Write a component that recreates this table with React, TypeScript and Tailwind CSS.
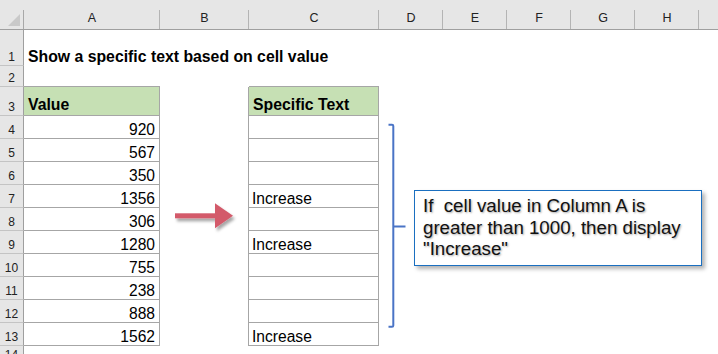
import React from "react";

const COLS = ["A", "B", "C", "D", "E", "F", "G", "H", ""];

type Row = { n: number; a?: string; c?: string };

const dataRows: Row[] = [
  { n: 4, a: "920" },
  { n: 5, a: "567" },
  { n: 6, a: "350" },
  { n: 7, a: "1356", c: "Increase" },
  { n: 8, a: "306" },
  { n: 9, a: "1280", c: "Increase" },
  { n: 10, a: "755" },
  { n: 11, a: "238" },
  { n: 12, a: "888" },
  { n: 13, a: "1562", c: "Increase" },
];

const font = "font-['Liberation_Sans',Arial,sans-serif]";

function RowHead({ n }: { n: number }) {
  return (
    <div className="flex items-end justify-center border-r border-b border-r-[#9f9f9f] border-b-[#c4c4c4] bg-[#e6e6e6] pb-[1px] text-[12px] leading-[14px] text-[#222]">
      {n}
    </div>
  );
}

function Empty({ cls = "" }: { cls?: string }) {
  return <div className={cls} />;
}

export default function App() {
  return (
    <div className={`relative h-[354px] w-[718px] overflow-hidden bg-white ${font}`}>
      <div className="grid grid-cols-[24px_136px_89px_130px_64px_64px_64px_64px_64px_19px] grid-rows-[30px_36px_21px_29px_23px_23px_23px_23px_23px_23px_23px_23px_23px_23px_18px]">
        {/* column header row */}
        <div className="relative border-b border-[#9f9f9f] bg-[#e6e6e6]">
          <div className="absolute right-0 top-[10px] bottom-0 w-px bg-[#a8a8a8]" />
          <svg className="absolute left-0 top-0" width="23" height="29">
            <polygon points="8,26 20,26 20,14" fill="#c9c9c9" />
          </svg>
        </div>
        {COLS.map((c, i) => (
          <div
            key={i}
            className="relative flex items-end justify-center border-b border-[#9f9f9f] bg-[#e6e6e6] pb-[4px] text-[12.5px] leading-[14px] text-[#222]"
          >
            {c}
            {i < 8 && <div className="absolute right-0 top-[10px] bottom-0 w-px bg-[#b4b4b4]" />}
          </div>
        ))}

        {/* row 1 */}
        <RowHead n={1} />
        <div className="relative flex items-end whitespace-nowrap pb-[1px] pl-[4px] text-[15.8px] font-bold leading-[16px] text-black">
          Show a specific text based on cell value
        </div>
        {COLS.slice(1).map((_, i) => (
          <Empty key={i} />
        ))}

        {/* row 2 */}
        <RowHead n={2} />
        <Empty cls="border-b border-[#a6a6a6]" />
        <Empty />
        <Empty cls="border-b border-[#a6a6a6]" />
        {COLS.slice(3).map((_, i) => (
          <Empty key={i} />
        ))}

        {/* row 3 */}
        <RowHead n={3} />
        <div className="flex items-end border-r border-b border-[#a6a6a6] bg-[#c6e0b4] pb-[2px] pl-[4px] text-[15.8px] font-bold leading-[16px] text-black">
          Value
        </div>
        <Empty cls="border-r border-[#a6a6a6]" />
        <div className="flex items-end whitespace-nowrap border-r border-b border-[#a6a6a6] bg-[#c6e0b4] pb-[2px] pl-[4px] text-[15.8px] font-bold leading-[16px] text-black">
          Specific Text
        </div>
        {COLS.slice(3).map((_, i) => (
          <Empty key={i} />
        ))}

        {/* data rows */}
        {dataRows.map((r) => (
          <React.Fragment key={r.n}>
            <RowHead n={r.n} />
            <div className="flex items-end justify-end border-r border-b border-[#a6a6a6] pr-[4px] text-[15.6px] leading-[16px] text-black">
              {r.a}
            </div>
            <Empty cls="border-r border-[#a6a6a6]" />
            <div className="flex items-end border-r border-b border-[#a6a6a6] pl-[3px] text-[15.6px] leading-[16px] text-black">
              {r.c ?? ""}
            </div>
            {COLS.slice(3).map((_, i) => (
              <Empty key={i} />
            ))}
          </React.Fragment>
        ))}

        {/* row 14 */}
        <RowHead n={14} />
        {COLS.map((_, i) => (
          <Empty key={i} />
        ))}
      </div>

      {/* arrow */}
      <svg className="absolute left-[170px] top-[198px]" width="72" height="40" viewBox="0 0 72 40">
        <defs>
          <filter id="ash" x="-20%" y="-40%" width="150%" height="190%">
            <feDropShadow dx="2" dy="3" stdDeviation="1.6" floodColor="#000" floodOpacity="0.35" />
          </filter>
        </defs>
        <g filter="url(#ash)" fill="#d35a6b">
          <rect x="5" y="15.3" width="42" height="5" />
          <polygon points="45,5.3 63,17.7 45,30.3" />
        </g>
      </svg>

      {/* bracket */}
      <svg className="absolute left-[384px] top-[120px]" width="26" height="212" viewBox="0 0 26 212">
        <path
          d="M4.5 4.7 H8 Q9.3 4.7 9.3 6 V205.4 Q9.3 206.7 8 206.7 H4.5 M9.3 106.5 H21.5"
          fill="none"
          stroke="#4a74c6"
          strokeWidth="2"
        />
      </svg>

      {/* text box */}
      <div className="absolute left-[414px] top-[190px] h-[76px] w-[288px] border border-[#1a6fc0] bg-white pl-[8px] pt-[4px] text-[18.7px] leading-[21.5px] text-[#111] shadow-[3px_3px_4px_rgba(0,0,0,0.3)] [text-shadow:1px_1px_2px_rgba(0,0,0,0.35)]">
        <div className="whitespace-pre">If  cell value in Column A is</div>
        <div className="whitespace-pre">greater than 1000, then display</div>
        <div className="whitespace-pre">"Increase"</div>
      </div>
    </div>
  );
}
